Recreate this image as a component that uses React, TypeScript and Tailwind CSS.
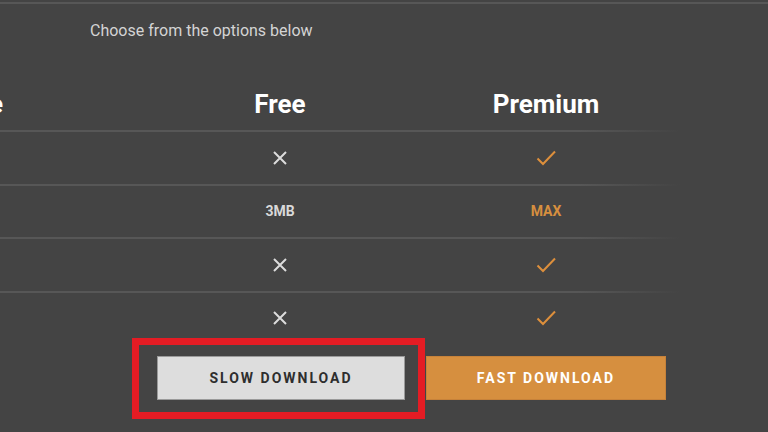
import React from "react";

const XIcon = () => (
  <svg width="16" height="16" viewBox="0 0 16 16" className="block">
    <path d="M2 2 L14 14 M14 2 L2 14" stroke="#dcdcdc" strokeWidth="2" fill="none" />
  </svg>
);

const CheckIcon = () => (
  <svg width="20" height="16" viewBox="0 0 20 16" className="block">
    <path d="M1.5 8.5 L7 14 L19 1.5" stroke="#dd8f3c" strokeWidth="2" fill="none" />
  </svg>
);

const Line = () => (
  <div className="h-[2px] w-[680px] bg-[linear-gradient(to_right,#575757_85%,transparent)]" />
);

type Cell = "x" | "check" | string;

const rows: [Cell, Cell][] = [
  ["x", "check"],
  ["3MB", "MAX"],
  ["x", "check"],
  ["x", "check"],
];

const renderCell = (c: Cell, premium: boolean) => {
  if (c === "x") return <XIcon />;
  if (c === "check") return <CheckIcon />;
  return (
    <span
      className={`text-[14px] font-bold ${premium ? "text-[#d68f3f]" : "text-[#d9d9d9]"}`}
    >
      {c}
    </span>
  );
};

export default function App() {
  return (
    <div className="w-[768px] h-[432px] overflow-hidden bg-[#444444] font-['Roboto',sans-serif]">
      <div className="h-[2px] mt-[2px] bg-[#575757]" />
      <p className="pl-[90px] pt-[15px] text-[16px] leading-[24px] text-[#d4d4d4]">
        Choose from the options below
      </p>
      <div className="mt-[33px] flex h-[54px] pt-[3px] items-center ml-[-200px]">
        <div className="w-[347px] pr-[144px] text-right text-[26px] font-bold text-white">
          Feature
        </div>
        <div className="w-[266px] text-center text-[26px] font-bold text-white">Free</div>
        <div className="w-[266px] text-center text-[26px] font-bold text-white">Premium</div>
      </div>
      {rows.map((r, i) => (
        <div key={i}>
          <Line />
          <div className="flex h-[51.5px] items-center">
            <div className="w-[147px]" />
            <div className="w-[266px] flex justify-center">{renderCell(r[0], false)}</div>
            <div className="w-[266px] flex justify-center">{renderCell(r[1], true)}</div>
          </div>
        </div>
      ))}
      <div className="flex items-start ml-[132px] mt-[-6px]">
        <div className="border-[7px] border-[#e41c24] pl-[18px] pr-[13px] pt-[11px] pb-[12px]">
          <div className="w-[248px] h-[44px] bg-[#dddddd] border border-[#9a9a9a] flex items-center justify-center text-[14px] font-bold tracking-[2px] text-[#2e2e2e]">
            SLOW DOWNLOAD
          </div>
        </div>
        <div className="ml-[1px] mt-[18px] w-[240px] h-[44px] bg-[#d68f3f] border border-[#c7823a] flex items-center justify-center text-[14px] font-bold tracking-[2px] text-white">
          FAST DOWNLOAD
        </div>
      </div>
    </div>
  );
}
